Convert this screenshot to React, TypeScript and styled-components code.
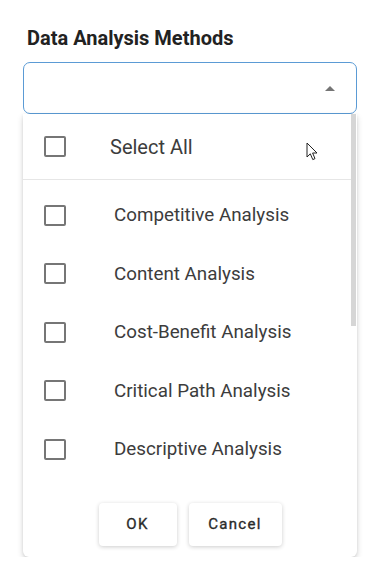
import styled, { createGlobalStyle } from "styled-components";

const GlobalStyle = createGlobalStyle`
  html, body {
    margin: 0;
    padding: 0;
    background: #ffffff;
    font-family: Roboto, "Liberation Sans", sans-serif;
  }
`;

const options = [
  "Competitive Analysis",
  "Content Analysis",
  "Cost-Benefit Analysis",
  "Critical Path Analysis",
  "Descriptive Analysis",
];

export default function App() {
  return (
    <>
      <GlobalStyle />
      <Page>
        <Label>Data Analysis Methods</Label>
        <Field>
          <Caret />
        </Field>
        <Panel>
          <Thumb />
          <SelectAllRow>
            <Checkbox />
            <SelectAllText>Select All</SelectAllText>
            <Pointer width="13" height="19" viewBox="0 0 13 19">
              <path
                d="M1 1 L1 15 L4.3 11.8 L6.8 17.6 L9 16.6 L6.6 11 L11 11 Z"
                fill="#ffffff"
                stroke="#222222"
                strokeWidth="1"
                strokeLinejoin="round"
              />
            </Pointer>
          </SelectAllRow>
          <List>
            {options.map(o => (
              <Item key={o}>
                <Checkbox />
                <ItemText>{o}</ItemText>
              </Item>
            ))}
          </List>
          <Footer>
            <Button $width={78}>OK</Button>
            <Button $width={93}>Cancel</Button>
          </Footer>
        </Panel>
      </Page>
    </>
  );
}

const Page = styled.div`
  padding: 26px 21px 0 23px;
  width: 334px;
`;

const Label = styled.div`
  font-size: 20px;
  font-weight: 700;
  color: #222222;
  padding-left: 4px;
  line-height: 24px;
  margin-bottom: 12px;
`;

const Field = styled.div`
  border: 1px solid #5b9bd5;
  border-radius: 7px;
  display: flex;
  align-items: center;
  justify-content: flex-end;
  padding-right: 21px;
  box-sizing: border-box;
  height: 52px;
`;

const Caret = styled.span`
  width: 0;
  height: 0;
  border-left: 5px solid transparent;
  border-right: 5px solid transparent;
  border-bottom: 5px solid #757575;
`;

const Panel = styled.div`
  position: relative;
  width: 334px;
  background: #ffffff;
  border-radius: 0 0 6px 6px;
  box-shadow: 0 3px 6px rgba(0, 0, 0, 0.16), 0 1px 3px rgba(0, 0, 0, 0.08);
  display: flex;
  flex-direction: column;
`;

const Thumb = styled.div`
  position: absolute;
  right: 1px;
  top: 0;
  width: 5px;
  height: 212px;
  background: #d6d6d6;
`;

const SelectAllRow = styled.div`
  position: relative;
  height: 65px;
  display: flex;
  align-items: center;
  padding-left: 21px;
  border-bottom: 1px solid #e6e6e6;
  margin-right: 6px;
`;

const Checkbox = styled.span`
  width: 22px;
  height: 21px;
  box-sizing: border-box;
  border: 2px solid #767676;
  border-radius: 2px;
  flex: none;
`;

const SelectAllText = styled.span`
  margin-left: 44px;
  font-size: 20px;
  color: #3c3c3c;
`;

const Pointer = styled.svg`
  position: absolute;
  left: 283px;
  top: 28px;
`;

const List = styled.div`
  padding-top: 6px;
  display: flex;
  flex-direction: column;
`;

const Item = styled.div`
  height: 58.5px;
  display: flex;
  align-items: center;
  padding-left: 21px;
`;

const ItemText = styled.span`
  margin-left: 48px;
  font-size: 18.8px;
  color: #3c3c3c;
`;

const Footer = styled.div`
  display: flex;
  justify-content: center;
  gap: 12px;
  padding: 24px 0 11px;
`;

const Button = styled.button<{ $width: number }>`
  width: ${p => p.$width}px;
  height: 43px;
  border: none;
  border-radius: 4px;
  background: #ffffff;
  box-shadow: 0 1px 4px rgba(0, 0, 0, 0.2);
  font-family: Roboto, "Liberation Sans", sans-serif;
  font-size: 15px;
  font-weight: 400;
  letter-spacing: 1.3px;
  color: #2a2a2a;
  -webkit-text-stroke: 0.35px #2a2a2a;
`;
